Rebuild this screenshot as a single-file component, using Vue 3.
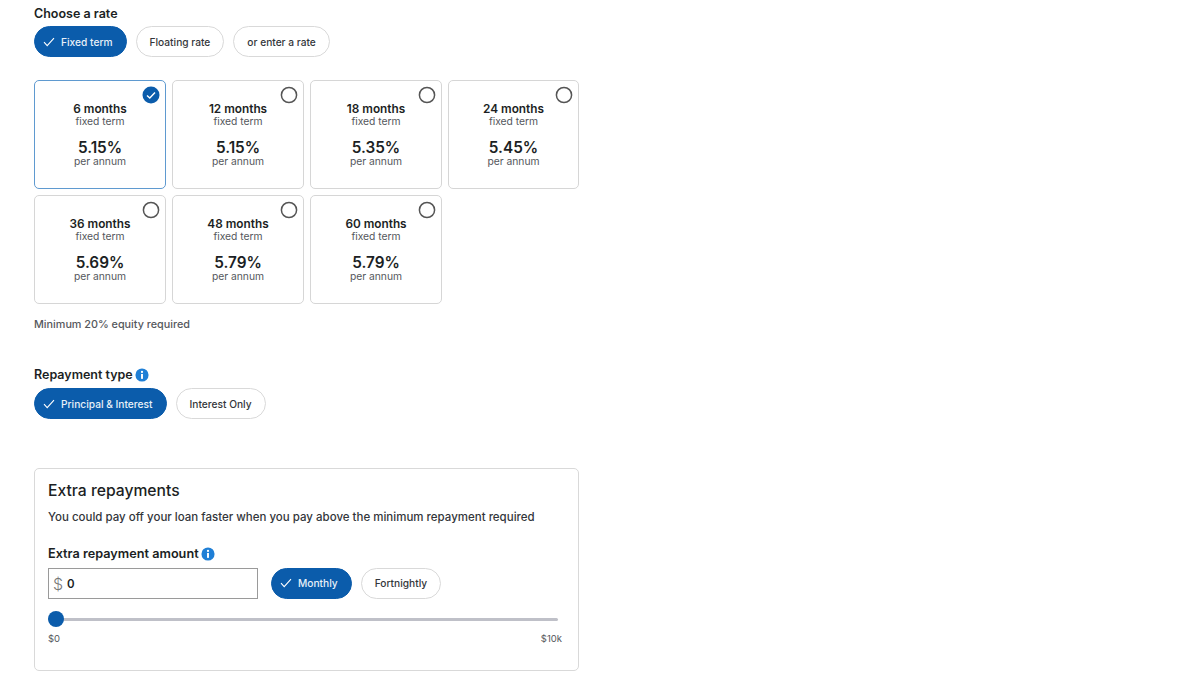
<script setup>
const rates = [
  { term: '6 months', rate: '5.15%', selected: true },
  { term: '12 months', rate: '5.15%' },
  { term: '18 months', rate: '5.35%' },
  { term: '24 months', rate: '5.45%' },
  { term: '36 months', rate: '5.69%' },
  { term: '48 months', rate: '5.79%' },
  { term: '60 months', rate: '5.79%' },
]
</script>

<template>
  <main class="page">
    <h2 class="heading">Choose a rate</h2>
    <div class="pills">
      <button class="pill on">
        <svg class="tick" viewBox="0 0 12 10"><path d="M1 5.2 4.2 8.6 11 1.2" /></svg>
        Fixed term
      </button>
      <button class="pill">Floating rate</button>
      <button class="pill">or enter a rate</button>
    </div>

    <div class="grid">
      <div v-for="r in rates" :key="r.term" class="card" :class="{ active: r.selected }">
        <svg v-if="r.selected" class="radio" viewBox="0 0 18 18">
          <circle cx="9" cy="9" r="8.5" fill="#0b5cab" />
          <path d="M5 9.4 7.8 12 13 6.4" fill="none" stroke="#fff" stroke-width="1.4" />
        </svg>
        <svg v-else class="radio" viewBox="0 0 18 18">
          <circle cx="9" cy="9" r="7.6" fill="#fff" stroke="#555" stroke-width="1.5" />
        </svg>
        <div class="term">{{ r.term }}</div>
        <div class="sub">fixed term</div>
        <div class="rate">{{ r.rate }}</div>
        <div class="sub">per annum</div>
      </div>
    </div>

    <p class="note">Minimum 20% equity required</p>

    <h2 class="heading repay">
      Repayment type
      <svg class="info" viewBox="0 0 16 16">
        <circle cx="8" cy="8" r="7.5" fill="#1f7fd6" />
        <rect x="6.9" y="6.8" width="2.2" height="5.6" fill="#fff" />
        <circle cx="8" cy="4.5" r="1.3" fill="#fff" />
      </svg>
    </h2>
    <div class="pills">
      <button class="pill on">
        <svg class="tick" viewBox="0 0 12 10"><path d="M1 5.2 4.2 8.6 11 1.2" /></svg>
        Principal &amp; Interest
      </button>
      <button class="pill">Interest Only</button>
    </div>

    <section class="extra">
      <h3 class="extra-title">Extra repayments</h3>
      <p class="extra-copy">You could pay off your loan faster when you pay above the minimum repayment required</p>
      <h4 class="extra-label">
        Extra repayment amount
        <svg class="info" viewBox="0 0 16 16">
          <circle cx="8" cy="8" r="7.5" fill="#1f7fd6" />
          <rect x="6.9" y="6.8" width="2.2" height="5.6" fill="#fff" />
          <circle cx="8" cy="4.5" r="1.3" fill="#fff" />
        </svg>
      </h4>
      <div class="amount-row">
        <div class="input"><span class="dollar">$</span><span class="zero">0</span></div>
        <button class="pill on">
          <svg class="tick" viewBox="0 0 12 10"><path d="M1 5.2 4.2 8.6 11 1.2" /></svg>
          Monthly
        </button>
        <button class="pill">Fortnightly</button>
      </div>
      <div class="slider"><span class="thumb"></span></div>
      <div class="ends"><span>$0</span><span>$10k</span></div>
    </section>
  </main>
</template>

<style scoped>
.page {
  box-sizing: border-box;
  width: 1200px;
  height: 675px;
  overflow: hidden;
  padding: 6px 0 0 34px;
  background: #fff;
  color: #1c1f24;
  font-family: Inter, "Liberation Sans", sans-serif;
}
.heading {
  margin: 0;
  font-size: 12.5px;
  line-height: 16px;
  font-weight: 600;
  display: flex;
  align-items: center;
  gap: 2px;
}
.pills {
  display: flex;
  gap: 9px;
  margin-top: 4px;
}
.pill {
  box-sizing: border-box;
  height: 31px;
  padding: 0 13px;
  border: 1px solid #d9d9d9;
  border-radius: 16px;
  background: #fff;
  color: #33363b;
  font: 500 10.2px Inter, "Liberation Sans", sans-serif;
  display: flex;
  align-items: center;
  gap: 6px;
  white-space: nowrap;
}
.pill.on {
  background: #0b5cab;
  border-color: #0b5cab;
  color: #e8f0f8;
  padding: 0 13px 0 8px;
}
.amount-row .pill {
  padding-bottom: 1px;
}
.tick {
  width: 12px;
  height: 10px;
  fill: none;
  stroke: #fff;
  stroke-width: 1.1;
}
.grid {
  display: grid;
  grid-template-columns: 132px 132px 132px 131px;
  grid-auto-rows: 109px;
  gap: 6px;
  margin-top: 23px;
  width: 545px;
}
.card {
  position: relative;
  box-sizing: border-box;
  border: 1px solid #d6d6d6;
  border-radius: 5px;
  padding: 21px 0 0;
  text-align: center;
}
.card.active {
  border-color: #5f9ad0;
}
.radio {
  position: absolute;
  top: 5px;
  right: 5px;
  width: 18px;
  height: 18px;
}
.term {
  font-size: 11.8px;
  line-height: 14px;
  font-weight: 600;
}
.sub {
  font-size: 10.3px;
  line-height: 11px;
  color: #55585d;
}
.rate {
  margin-top: 12px;
  font-size: 15.3px;
  line-height: 17px;
  font-weight: 600;
}
.note {
  margin: 14px 0 0;
  font-size: 10.8px;
  line-height: 14px;
  font-weight: 500;
  color: #55585d;
}
.repay {
  margin-top: 35px;
}
.repay + .pills {
  margin-top: 5px;
}
.info {
  width: 14px;
  height: 14px;
}
.extra {
  box-sizing: border-box;
  width: 545px;
  height: 203px;
  margin-top: 49px;
  padding: 12px 13px 0;
  border: 1px solid #d9d9d9;
  border-radius: 5px;
}
.extra-title {
  margin: 0;
  font-size: 15.7px;
  line-height: 20px;
  font-weight: 500;
}
.extra-copy {
  margin: 8px 0 0;
  font-size: 11.5px;
  line-height: 16px;
  font-weight: 500;
  color: #33363b;
}
.extra-label {
  margin: 21px 0 0;
  font-size: 12.7px;
  line-height: 16px;
  font-weight: 600;
  display: flex;
  align-items: center;
  gap: 2px;
}
.amount-row {
  display: flex;
  align-items: center;
  gap: 9px;
  margin-top: 6px;
}
.input {
  box-sizing: border-box;
  width: 210px;
  height: 31px;
  margin-right: 4px;
  padding-left: 4px;
  border: 1px solid #9a9a9a;
  display: flex;
  align-items: center;
  gap: 4px;
}
.dollar {
  font-size: 16px;
  font-weight: 300;
  color: #777;
}
.zero {
  font-size: 11.5px;
  font-weight: 600;
}
.slider {
  position: relative;
  width: 510px;
  height: 3px;
  margin-top: 19px;
  background: #bfc0c8;
  border-radius: 2px;
}
.thumb {
  position: absolute;
  left: 0;
  top: -7px;
  width: 16px;
  height: 16px;
  border-radius: 50%;
  background: #0b5cab;
}
.ends {
  display: flex;
  justify-content: space-between;
  width: 514px;
  margin-top: 12px;
  font-size: 9.5px;
  line-height: 12px;
  color: #55585d;
}
</style>

<style>
html, body { background: #fff; }
</style>
